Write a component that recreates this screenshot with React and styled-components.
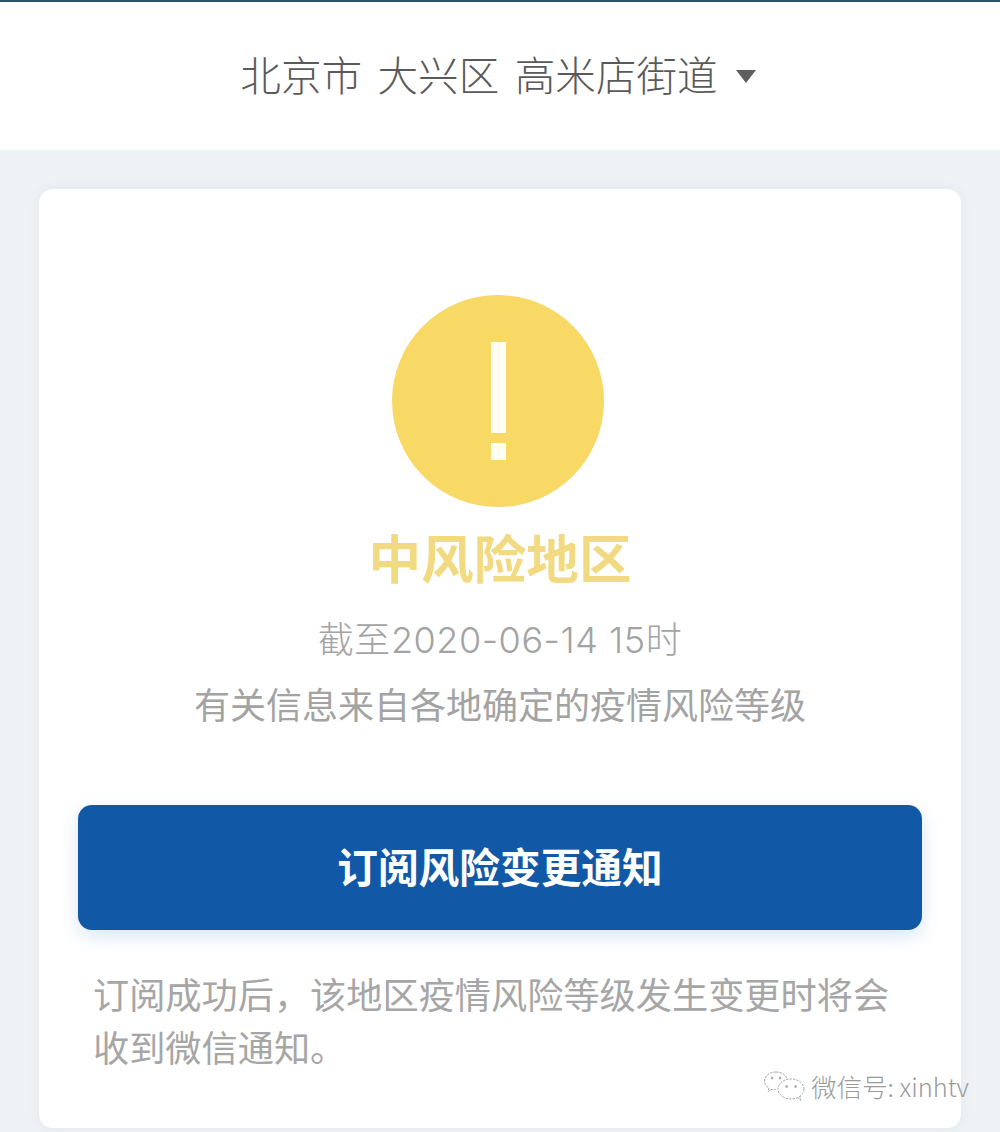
import React from "react";
import styled, { createGlobalStyle } from "styled-components";

const GlobalStyle = createGlobalStyle`
  html, body {
    margin: 0;
    padding: 0;
    background: #eef2f5;
  }
  body {
    font-family: "Noto Sans CJK SC", "Liberation Sans", sans-serif;
  }
`;

const Page = styled.div`
  width: 1000px;
  height: 1132px;
  overflow: hidden;
  display: flex;
  flex-direction: column;
  background: #eef2f5;
`;

const Header = styled.header`
  height: 150px;
  flex: none;
  border-top: 2px solid #2c5368;
  padding-right: 4px;
  box-sizing: border-box;
  background: #fff;
  display: flex;
  align-items: center;
  justify-content: center;
  gap: 18px;
  color: #5a5a5a;
  font-size: 40.6px;
  font-weight: 300;
  word-spacing: 6.5px;
`;

const HeaderText = styled.span`
  margin-top: -5px;
`;

const Caret = styled.span`
  width: 0;
  height: 0;
  margin-top: 1px;
  border-left: 10px solid transparent;
  border-right: 10px solid transparent;
  border-top: 13px solid #5f5f5f;
`;

const Card = styled.main`
  position: relative;
  width: 922px;
  height: 939px;
  margin: 39px 0 0 39px;
  padding-top: 106px;
  box-sizing: border-box;
  border-radius: 14px;
  background: #fff;
  box-shadow: 0 0 8px rgba(210, 218, 224, 0.45);
  display: flex;
  flex-direction: column;
  align-items: center;
`;

const Level = styled.h1`
  margin: 21px 0 0;
  color: #f2da82;
  font-size: 52.6px;
  line-height: 56px;
  font-weight: 700;
`;

const Info = styled.p`
  margin: ${(p) => p.$top}px 0 0;
  color: #a3a3a3;
  font-family: ${(p) => (p.$wide ? `"Inter", "Noto Sans CJK SC", sans-serif` : "inherit")};
  font-size: 36px;
  line-height: 50px;
  font-weight: ${(p) => (p.$wide ? 300 : 400)};
  letter-spacing: ${(p) => (p.$wide ? "0.55px" : "normal")};
`;

const Button = styled.button`
  width: 844px;
  height: 125px;
  flex: none;
  margin-top: 77px;
  padding: 0 0 4px;
  border: 0;
  border-radius: 14px;
  background: #1159a6;
  box-shadow: 0 6px 18px rgba(80, 140, 210, 0.22);
  color: #fff;
  font-family: inherit;
  font-size: 40.7px;
  font-weight: 700;
`;

const Note = styled.p`
  align-self: flex-start;
  width: 800px;
  margin: 37px 0 0 54px;
  color: #a6a6a6;
  font-size: 36.2px;
  line-height: 53px;
`;

const Watermark = styled.div`
  position: absolute;
  right: -8px;
  bottom: 26px;
  display: flex;
  align-items: center;
  gap: 6px;
  color: #9a9a9a;
  font-size: 25.4px;
  line-height: 32px;
  font-weight: 300;
`;

const ALERT_BAR = { x: 99, y: 47, width: 15, height: 91 };
const ALERT_DOT = { x: 99, y: 148, width: 15, height: 17 };

const Alert = styled.svg`
  flex: none;
  margin-left: -4px;
`;

const AlertIcon = () => (
  <Alert width="212" height="212" viewBox="0 0 212 212">
    <circle cx="106" cy="106" r="106" fill="#f8d966" />
    <rect {...ALERT_BAR} fill="#fffdf2" />
    <rect {...ALERT_DOT} fill="#fffdf2" />
  </Alert>
);

const WechatIcon = () => (
  <svg width="42" height="30" viewBox="0 0 42 30" fill="none" stroke="#a8a8a8" strokeWidth="1" strokeDasharray="2.5 1">
    <path d="M13 1C6.5 1 1.500 5 1.500 10c0 3 1.700 5.300 4.500 7l-1 3.500 4-2.200c1.200.3 2.400.5 3.800.5" />
    <path d="M13 1c5.500 0 10 2.800 11 7" />
    <ellipse cx="28" cy="18" rx="13" ry="10" />
    <path d="M35 26.500l2.500 3-.5-4.500" />
    <circle cx="23.500" cy="15.500" r="1" fill="#a8a8a8" />
    <circle cx="32.500" cy="15.500" r="1" fill="#a8a8a8" />
    <circle cx="9" cy="7" r="1" fill="#a8a8a8" />
    <circle cx="17" cy="7" r="1" fill="#a8a8a8" />
  </svg>
);

const App = () => {
  return (
    <Page>
      <GlobalStyle />
      <Header>
        <HeaderText>北京市 大兴区 高米店街道</HeaderText>
        <Caret />
      </Header>
      <Card>
        <AlertIcon />
        <Level>中风险地区</Level>
        <Info $top={31} $wide>截至2020-06-14 15时</Info>
        <Info $top={13}>有关信息来自各地确定的疫情风险等级</Info>
        <Button>订阅风险变更通知</Button>
        <Note>订阅成功后，该地区疫情风险等级发生变更时将会收到微信通知。</Note>
        <Watermark>
          <WechatIcon />
          <span>微信号: xinhtv</span>
        </Watermark>
      </Card>
    </Page>
  );
};

export default App;
